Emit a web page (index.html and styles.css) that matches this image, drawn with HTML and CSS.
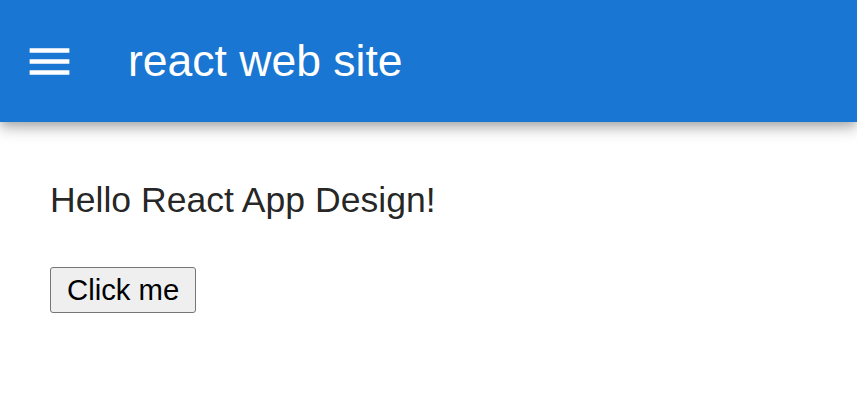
FILE: index.html
```html
<!DOCTYPE html>
<html lang="en">
<head>
<meta charset="utf-8">
<title>react web site</title>
<link rel="stylesheet" href="styles.css">
</head>
<body>
<header class="appbar">
  <div class="toolbar">
    <button class="menu-btn" aria-label="menu">
      <svg class="menu-icon" viewBox="0 0 24 24" aria-hidden="true"><path d="M3 18h18v-2H3v2zm0-5h18v-2H3v2zm0-7v2h18V6H3z"/></svg>
    </button>
    <h1 class="title">react web site</h1>
  </div>
</header>
<main class="content">
  <p class="hello">Hello React App Design!</p>
  <button class="click-btn">Click me</button>
</main>
</body>
</html>
```
FILE: styles.css
```css
html, body {
  margin: 0;
  padding: 0;
  background: #fff;
}
body {
  font-family: "Liberation Sans", Arial, sans-serif;
}
.appbar {
  background: #1976d2;
  color: #fff;
  box-shadow: 0 4.4px 8.8px -2.2px rgba(0,0,0,0.2), 0 8.8px 11px 0 rgba(0,0,0,0.14), 0 2.2px 22px 0 rgba(0,0,0,0.12);
  position: relative;
  z-index: 1;
}
.toolbar {
  height: 122px;
  display: flex;
  align-items: center;
  padding-left: 23px;
}
.menu-btn {
  background: none;
  border: 0;
  padding: 0;
  margin: 0 52px 0 0;
  width: 53px;
  height: 53px;
  display: flex;
  color: #fff;
}
.menu-icon {
  width: 53px;
  height: 53px;
  fill: currentColor;
}
.title {
  margin: 0;
  font-size: 44.5px;
  font-weight: 400;
  line-height: 70px;
}
.content {
  display: flex;
  flex-direction: column;
  align-items: flex-start;
  gap: 47px;
  padding: 58px 50px 0;
}
.hello {
  margin: 0;
  font-size: 35.6px;
  color: rgba(0,0,0,0.87);
  line-height: 40px;
}
.click-btn {
  font-family: "Liberation Sans", Arial, sans-serif;
  font-size: 29.3px;
  color: #000;
  background: #efefef;
  border: 1px solid #767676;
  border-radius: 3px;
  height: 46px;
  padding: 0 16px;
  box-sizing: border-box;
}
```
